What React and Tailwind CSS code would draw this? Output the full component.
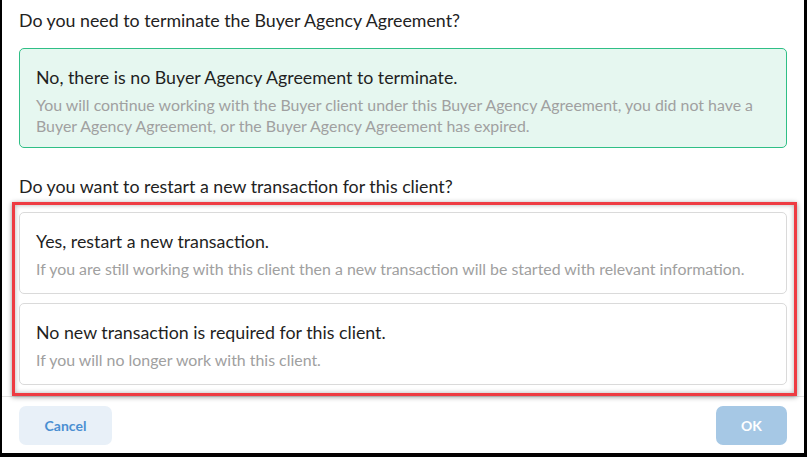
const font = { fontFamily: "Lato, 'Noto Sans', sans-serif" };

function Option({ title, text, className = "" }) {
  return (
    <div className={`rounded-[5px] border border-[#dadada] bg-white px-4 pt-4 pb-[14px] ${className}`}>
      <div className="text-[17.8px] leading-6 text-[#1f1f1f]">{title}</div>
      <div className="mt-[6px] text-[15.9px] leading-5 text-[#a0a0a0]">{text}</div>
    </div>
  );
}

export default function App() {
  return (
    <div className="flex h-[457px] w-[807px] bg-black pl-[2px] pr-[3px] pb-[4px]" style={font}>
      <div className="flex flex-1 flex-col bg-white">
        <div className="px-[17px] pt-[8px]">
          <p className="text-[17.8px] leading-6 text-[#222]">Do you need to terminate the Buyer Agency Agreement?</p>

          <div className="mt-4 rounded-[5px] border border-[#2fbf86] bg-[#e6f7f0] px-4 pt-4 pb-[11px]">
            <div className="text-[17.8px] leading-6 text-[#1f1f1f]">No, there is no Buyer Agency Agreement to terminate.</div>
            <div className="mt-[5px] text-[15.9px] leading-[21px] text-[#a0a0a0]">
              You will continue working with the Buyer client under this Buyer Agency Agreement, you did not have a
              <br />
              Buyer Agency Agreement, or the Buyer Agency Agreement has expired.
            </div>
          </div>

          <p className="mt-[26px] text-[17.8px] leading-6 text-[#222]">Do you want to restart a new transaction for this client?</p>

          <div className="relative mt-[14px] flex flex-col gap-[9px]">
            <Option
              title="Yes, restart a new transaction."
              text="If you are still working with this client then a new transaction will be started with relevant information."
            />
            <Option title="No new transaction is required for this client." text="If you will no longer work with this client." />
            <div className="pointer-events-none absolute -top-[10px] -left-[7px] -right-[10px] -bottom-[11px] border-[3px] border-[#ee3b42] shadow-[0_1px_5px_rgba(0,0,0,0.4),inset_0_0_5px_rgba(0,0,0,0.3)]" />
          </div>
        </div>

        <div className="mt-[11px] border-t border-[#e3e3e3]" />

        <div className="flex items-center justify-between px-[17px] pt-[9px]">
          <button className="h-[39px] w-[93px] rounded-[7px] bg-[#e8f0f8] text-[14px] font-bold text-[#4a8fd2]">Cancel</button>
          <button className="h-[39px] w-[71px] rounded-[7px] bg-[#a6c8e5] text-[14px] font-bold text-white">OK</button>
        </div>
      </div>
    </div>
  );
}
